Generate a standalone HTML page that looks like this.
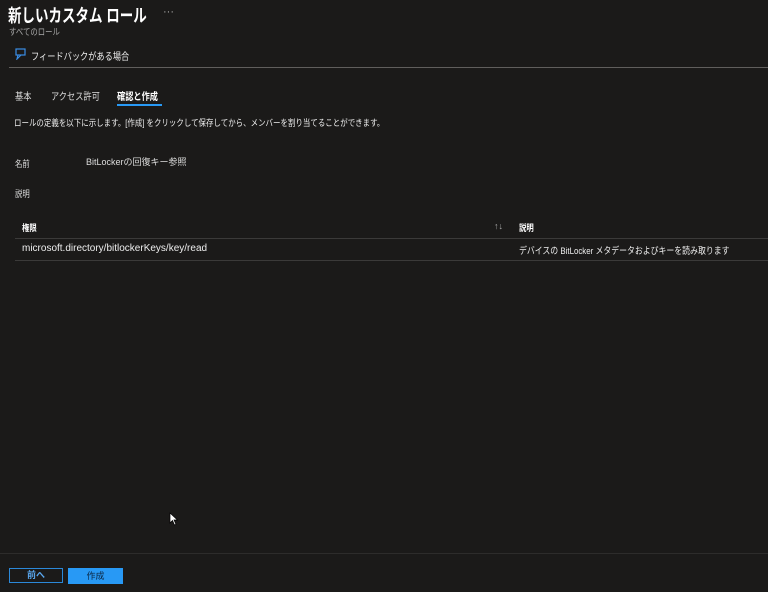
<!DOCTYPE html>
<html><head><meta charset="utf-8"><style>
body{margin:0;width:768px;height:592px;background:#1b1a19;color:#fff;font-family:"Liberation Sans","Noto Sans CJK JP",sans-serif;position:relative;overflow:hidden}
.a{position:absolute;white-space:nowrap}
.t{transform:scaleX(0.82);transform-origin:0 0}
</style></head><body>
<div class="a t" style="left:8px;top:2px;font-size:18px;font-weight:bold;transform:scaleX(0.75)">新しいカスタム ロール</div>
<div class="a" style="left:163px;top:6px;font-size:11px;color:#aaa">···</div>
<div class="a t" style="left:9px;top:25px;font-size:9px;color:#aaa">すべてのロール</div>
<svg class="a" style="left:15px;top:48px" width="12" height="12" viewBox="0 0 12 12"><rect x="1" y="1" width="9" height="6" fill="none" stroke="#3a8ee6" stroke-width="1.2"/><path d="M3 7 L2 11 L6 7" fill="none" stroke="#3a8ee6" stroke-width="1.2"/></svg>
<div class="a t" style="left:31px;top:48px;font-size:10px;color:#eee">フィードバックがある場合</div>
<div class="a" style="left:9px;top:67px;width:759px;height:1px;background:#605e5c"></div>
<div class="a t" style="left:15px;top:88px;font-size:10px;color:#ddd">基本</div>
<div class="a t" style="left:51px;top:88px;font-size:10px;color:#ddd">アクセス許可</div>
<div class="a t" style="left:117px;top:88px;font-size:10px;font-weight:bold">確認と作成</div>
<div class="a" style="left:117px;top:104px;width:45px;height:2px;background:#2899f5"></div>
<div class="a t" style="left:14px;top:116px;font-size:9px;color:#eee;transform:scaleX(0.83)">ロールの定義を以下に示します。[作成] をクリックして保存してから、メンバーを割り当てることができます。</div>
<div class="a t" style="left:15px;top:157px;font-size:9px;color:#ddd">名前</div>
<div class="a" style="left:86px;top:155px;font-size:9px;color:#ddd">BitLockerの回復キー参照</div>
<div class="a t" style="left:15px;top:187px;font-size:9px;color:#ddd">説明</div>
<div class="a t" style="left:22px;top:221px;font-size:9px;font-weight:bold">権限</div>
<div class="a" style="left:494px;top:221px;font-size:9px;color:#aaa">↑↓</div>
<div class="a t" style="left:519px;top:221px;font-size:9px;font-weight:bold">説明</div>
<div class="a" style="left:15px;top:238px;width:753px;height:1px;background:#3b3a39"></div>
<div class="a" style="left:22px;top:243px;font-size:10px;color:#eee">microsoft.directory/bitlockerKeys/key/read</div>
<div class="a t" style="left:519px;top:243px;font-size:9.5px;color:#eee;transform:scaleX(0.83)">デバイスの BitLocker メタデータおよびキーを読み取ります</div>
<div class="a" style="left:15px;top:260px;width:753px;height:1px;background:#3b3a39"></div>
<svg class="a" style="left:169px;top:512px" width="10" height="14" viewBox="0 0 10 14"><path d="M1 1 L1 11 L3.5 8.5 L5.5 13 L7 12.3 L5 8 L8.5 8 Z" fill="#fff" stroke="#000" stroke-width=".7"/></svg>
<div class="a" style="left:0;top:553px;width:768px;height:1px;background:#2d2c2b"></div>
<div class="a" style="left:9px;top:568px;width:54px;height:15px;border:1px solid #2b88d8;box-sizing:border-box;text-align:center;font-size:9px;line-height:13px;color:#5aa8f0;font-weight:bold">前へ</div>
<div class="a" style="left:68px;top:568px;width:55px;height:16px;background:#2899f5;text-align:center;font-size:9px;line-height:16px;color:#0b2540">作成</div>
</body></html>
